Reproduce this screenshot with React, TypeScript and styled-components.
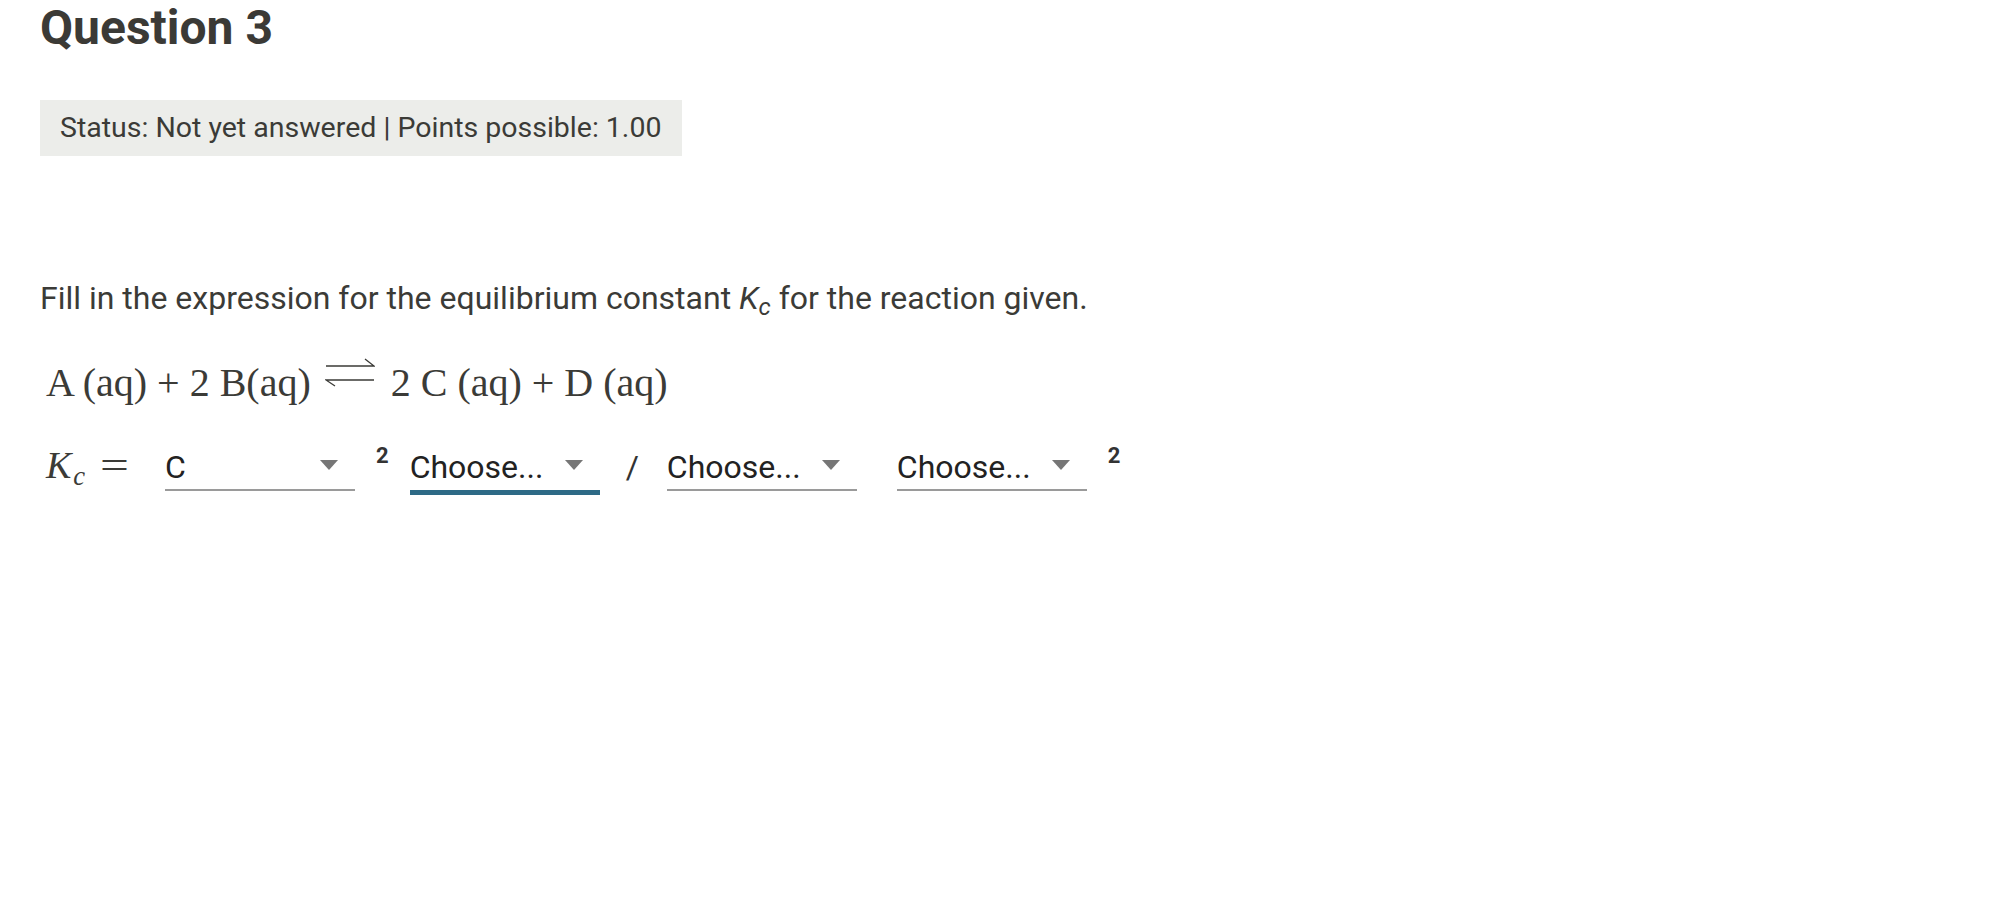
import React from 'react'
import styled, {createGlobalStyle} from 'styled-components'

const GlobalStyle = createGlobalStyle`
  body {
    margin: 0;
    background: #fff;
    font-family: Roboto, "Liberation Sans", sans-serif;
    color: #3b3b37;
  }
`

const Arrow = () => (
  <ArrowSvg width="50" height="30" viewBox="0 0 50 30">
    <path d="M1 9 H49 L40 2" fill="none" stroke="#3b3b37" strokeWidth="1.3" />
    <path d="M49 23 H1 L10 29" fill="none" stroke="#3b3b37" strokeWidth="1.3" />
  </ArrowSvg>
)

const Dropdown = ({value, active}: {value: string; active?: boolean}) => (
  <Select $active={active}>
    <span>{value}</span>
    <Caret />
  </Select>
)

const App = () => {
  return (
    <Page>
      <GlobalStyle />
      <Title>Question 3</Title>
      <Status>Status: Not yet answered | Points possible: 1.00</Status>
      <Prompt>
        Fill in the expression for the equilibrium constant{' '}
        <Em>
          K<Sub>c</Sub>
        </Em>{' '}
        for the reaction given.
      </Prompt>
      <Equation>
        A (aq) + 2 B(aq)
        <Arrow />2 C (aq) + D (aq)
      </Equation>
      <Answer>
        <MathLabel>
          K<MathSub>c</MathSub>
          <Equals>=</Equals>
        </MathLabel>
        <Dropdown value="C" />
        <Sup>2</Sup>
        <Dropdown value="Choose..." active />
        <Slash>/</Slash>
        <Dropdown value="Choose..." />
        <Spacer />
        <Dropdown value="Choose..." />
        <Sup>2</Sup>
      </Answer>
    </Page>
  )
}

export default App

const Page = styled.div`
  padding: 0 40px;
`
const Title = styled.h1`
  margin: 0;
  font-size: 48px;
  font-weight: 700;
  line-height: 56px;
  color: #3b3a36;
`
const Status = styled.div`
  display: inline-block;
  margin-top: 44px;
  padding: 10px 21px 10px 20px;
  background: #ecedea;
  font-size: 28.5px;
  line-height: 36px;
`
const Prompt = styled.p`
  margin: 123px 0 0;
  font-size: 32px;
  line-height: 38px;
`
const Em = styled.i`
  font-style: italic;
`
const Sub = styled.sub`
  font-size: 0.75em;
  line-height: 0;
  vertical-align: -0.25em;
`
const Equation = styled.div`
  margin-top: 40px;
  height: 45px;
  line-height: 45px;
  font-family: "Liberation Serif", serif;
  font-size: 40px;
  padding-left: 6px;
  white-space: pre;
`
const ArrowSvg = styled.svg`
  vertical-align: 9px;
  margin: 0 16px 0 14px;
`
const Answer = styled.div`
  display: flex;
  align-items: baseline;
  margin-top: 41px;
`
const MathLabel = styled.div`
  font-family: "Liberation Serif", serif;
  font-size: 38px;
  font-style: italic;
  width: 125px;
  padding-left: 6px;
  box-sizing: border-box;
`
const MathSub = styled.sub`
  font-size: 0.7em;
  line-height: 0;
  vertical-align: -0.25em;
  margin-left: 2px;
`
const Equals = styled.span`
  font-style: normal;
  margin-left: 15px;
  display: inline-block;
  transform: scaleX(1.35);
  transform-origin: left center;
`
const Select = styled.div<{$active?: boolean}>`
  display: flex;
  align-items: center;
  justify-content: space-between;
  width: 190px;
  box-sizing: border-box;
  padding: 0 17px ${(p) => (p.$active ? '4px' : '3px')} 0;
  border-bottom: ${(p) => (p.$active ? '5px solid #2e6a86' : '2px solid #9a9a9a')};
  font-size: 32px;
  color: #222;
`
const Caret = styled.span`
  width: 0;
  height: 0;
  margin-bottom: 4px;
  border-left: 9.5px solid transparent;
  border-right: 9.5px solid transparent;
  border-top: 10px solid #767676;
`
const Sup = styled.span`
  align-self: flex-start;
  margin: 0 21px;
  font-size: 22px;
  font-weight: 700;
  color: #333;
`
const Slash = styled.span`
  margin: 0 28px 0 26px;
  font-size: 32px;
  color: #333;
`
const Spacer = styled.span`
  width: 40px;
`
